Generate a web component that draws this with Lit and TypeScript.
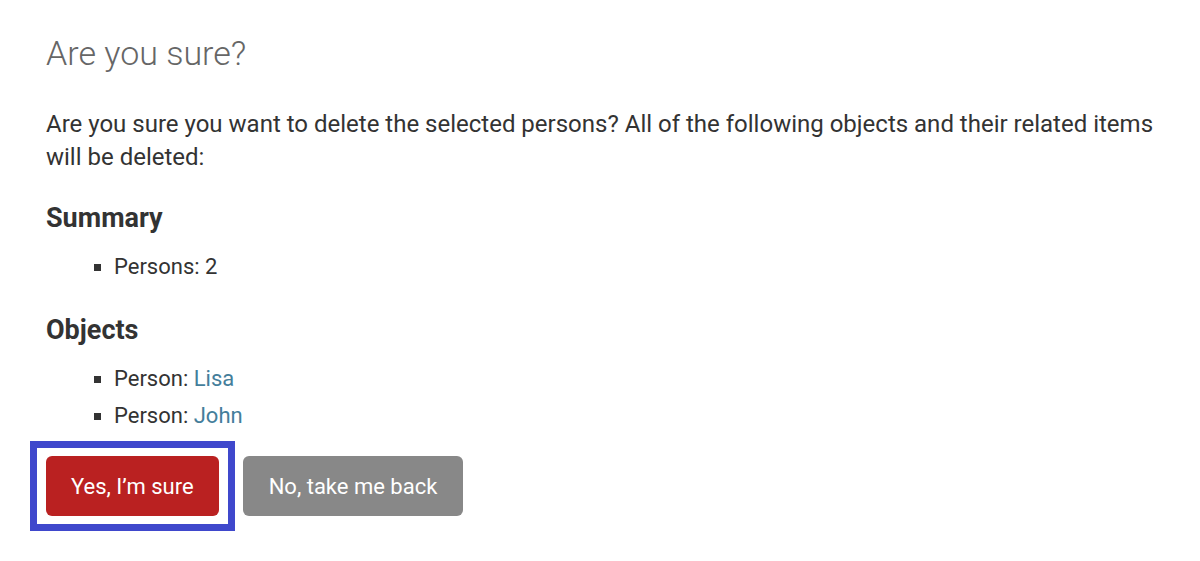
import { LitElement, html, css } from "lit";
import { customElement } from "lit/decorators.js";

@customElement("app-root")
class AppRoot extends LitElement {
  static styles = css`
    :host {
      display: block;
      padding: 32px 46px;
      font-family: Roboto, "Liberation Sans", sans-serif;
      font-size: 22px;
      color: #333;
      background: #fff;
    }
    .title { margin: 0 0 34px; font-size: 34px; line-height: 42px; font-weight: 300; color: #666; }
    .lead { margin: 0 0 24px; font-size: 24px; line-height: 33px; }
    .heading { margin: 0 0 10px; font-size: 27px; line-height: 40px; font-weight: 700; }
    .list { list-style: square; margin: 0 0 25px; padding: 0 0 0 68px; line-height: 37px; }
    .list.last { margin-bottom: 7px; }
    .link { color: #447e9b; text-decoration: none; }
    .actions { display: flex; align-items: center; gap: 8px; margin-left: -16px; }
    .marked { border: 7px solid #3f48cc; padding: 8px 9px; }
    .button { display: block; height: 60px; padding: 0 26px; border: 0; border-radius: 6px; font: inherit; color: #fff; background: #888; cursor: pointer; }
    .confirm { padding: 0 25px; background: #ba2121; }
  `;

  render() {
    return html`
      <main>
        <h1 class="title">Are you sure?</h1>
        <p class="lead">Are you sure you want to delete the selected persons? All of the following objects and their related items will be deleted:</p>
        <h2 class="heading">Summary</h2>
        <ul class="list"><li>Persons: 2</li></ul>
        <h2 class="heading">Objects</h2>
        <ul class="list last">
          <li>Person: <a class="link" href="#lisa">Lisa</a></li>
          <li>Person: <a class="link" href="#john">John</a></li>
        </ul>
        <div class="actions">
          <div class="marked"><button class="button confirm" type="submit">Yes, I’m sure</button></div>
          <button class="button" type="button">No, take me back</button>
        </div>
      </main>
    `;
  }
}
